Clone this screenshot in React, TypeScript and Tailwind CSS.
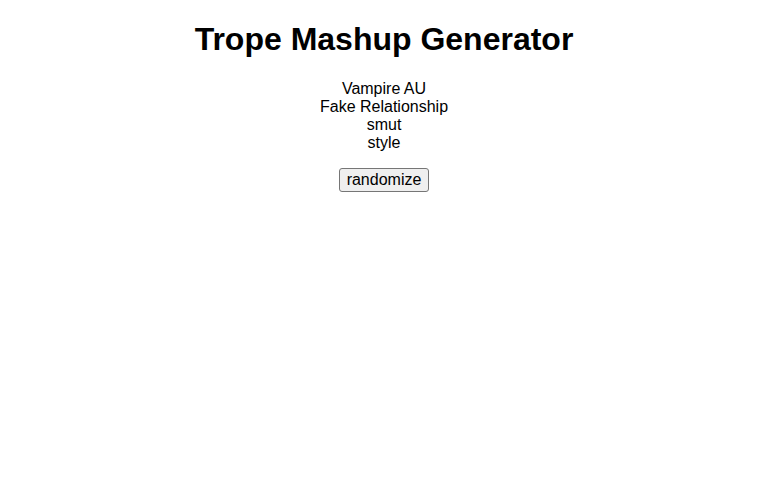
import React, { useState } from "react";

const TROPES = ["Vampire AU", "Fake Relationship", "Enemies to Lovers", "Coffee Shop AU", "Amnesia"];
const RATINGS = ["smut", "fluff", "angst"];
const EXTRAS = ["style", "crack", "slow burn"];

const pick = (list: string[]) => list[Math.floor(Math.random() * list.length)];

const App: React.FC = () => {
    const [mashup, setMashup] = useState<string[]>(["Vampire AU", "Fake Relationship", "smut", "style"]);

    const randomize = () => {
        setMashup([pick(TROPES), pick(TROPES), pick(RATINGS), pick(EXTRAS)]);
    };

    return (
        <div className="min-h-[480px] w-full bg-white text-black text-center font-['Liberation_Sans',Arial,sans-serif]">
            <h1 className="text-[32px] font-bold leading-[normal] pt-[21px] mb-[22px]">Trope Mashup Generator</h1>
            {/* generated list */}
            <div className="text-[16px] leading-[18px]">
                {mashup.map((item, i) => (
                    <div key={i}>{item}</div>
                ))}
            </div>
            <div className="mt-[16px]">
                <button
                    onClick={randomize}
                    className="text-[16px] leading-[normal] px-[7px] py-[2px] bg-[#efefef] border border-[#767676] rounded-[3px] cursor-pointer"
                >
                    randomize
                </button>
            </div>
        </div>
    );
};

export default App;
